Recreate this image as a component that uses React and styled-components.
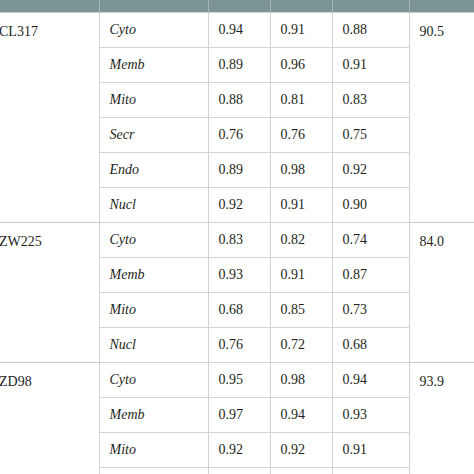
import styled, { createGlobalStyle } from "styled-components";

const GlobalStyle = createGlobalStyle`
  html, body {
    margin: 0;
    padding: 0;
    background: #ffffff;
    overflow: hidden;
  }
`;

const Page = styled.div`
  width: 474px;
  height: 474px;
  overflow: hidden;
`;

const Table = styled.table`
  border-collapse: collapse;
  table-layout: fixed;
  margin-left: -11px;
  width: 566px;
  font-family: "Liberation Serif", "Times New Roman", serif;
  font-size: 14px;
  color: #231f20;
`;

const Col = styled.col`
  width: ${({ $w }) => $w}px;
`;

const HeadRow = styled.tr`
  height: 12px;
  background: #7b9597;
`;

const HeadCell = styled.th`
  padding: 0;
  border-left: 1px solid #a3b5b6;
  &:first-child {
    border-left: none;
  }
`;

const Row = styled.tr`
  height: 35px;
`;

const Cell = styled.td`
  padding: 0 10px;
  vertical-align: middle;
  border: 1px solid #d3d3d3;
  font-style: ${({ $italic }) => ($italic ? "italic" : "normal")};
  white-space: nowrap;
`;

const GroupCell = styled.td`
  padding: 10px 10px 0;
  vertical-align: top;
  line-height: 17px;
  border-top: 1px solid #c9c9c9;
  border-bottom: 1px solid #c9c9c9;
  border-right: 1px solid #d3d3d3;
  border-left: none;
`;

const RateCell = styled(GroupCell)`
  border-left: 1px solid #d3d3d3;
  border-right: none;
`;

const widths = [110, 109, 62, 62, 77, 146];

const groups = [
  {
    name: "CL317",
    rate: "90.5",
    rows: [
      ["Cyto", "0.94", "0.91", "0.88"],
      ["Memb", "0.89", "0.96", "0.91"],
      ["Mito", "0.88", "0.81", "0.83"],
      ["Secr", "0.76", "0.76", "0.75"],
      ["Endo", "0.89", "0.98", "0.92"],
      ["Nucl", "0.92", "0.91", "0.90"],
    ],
  },
  {
    name: "ZW225",
    rate: "84.0",
    rows: [
      ["Cyto", "0.83", "0.82", "0.74"],
      ["Memb", "0.93", "0.91", "0.87"],
      ["Mito", "0.68", "0.85", "0.73"],
      ["Nucl", "0.76", "0.72", "0.68"],
    ],
  },
  {
    name: "ZD98",
    rate: "93.9",
    rows: [
      ["Cyto", "0.95", "0.98", "0.94"],
      ["Memb", "0.97", "0.94", "0.93"],
      ["Mito", "0.92", "0.92", "0.91"],
      // next row lies below the visible area
      ["", "", "", ""],
    ],
  },
];

export default function App() {
  return (
    <Page>
      <GlobalStyle />
      <Table>
        <colgroup>
          {widths.map((w, i) => (
            <Col key={i} $w={w} />
          ))}
        </colgroup>
        <thead>
          <HeadRow>
            {widths.map((_, i) => (
              <HeadCell key={i} />
            ))}
          </HeadRow>
        </thead>
        {groups.map((group) => (
          <tbody key={group.name}>
            {group.rows.map((row, i) => (
              <Row key={i}>
                {i === 0 && <GroupCell rowSpan={group.rows.length}>{group.name}</GroupCell>}
                <Cell $italic>{row[0]}</Cell>
                <Cell>{row[1]}</Cell>
                <Cell>{row[2]}</Cell>
                <Cell>{row[3]}</Cell>
                {i === 0 && <RateCell rowSpan={group.rows.length}>{group.rate}</RateCell>}
              </Row>
            ))}
          </tbody>
        ))}
      </Table>
    </Page>
  );
}
